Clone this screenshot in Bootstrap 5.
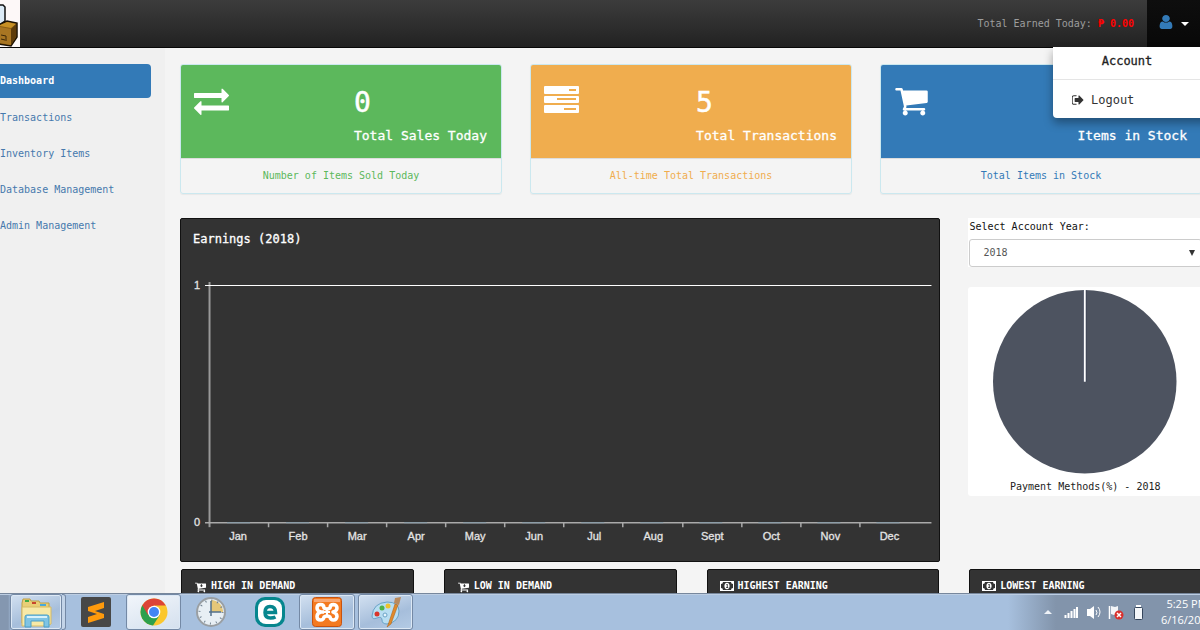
<!DOCTYPE html>
<html lang="en">
<head>
<meta charset="utf-8">
<meta name="viewport" content="width=device-width, initial-scale=1">
<title>Dashboard</title>
<link href="https://cdn.jsdelivr.net/npm/bootstrap@5.3.0/dist/css/bootstrap.min.css" rel="stylesheet">
<style>
:root { --bs-primary-rgb: 51,122,183; }
body { font-family: "DejaVu Sans Mono", monospace; font-size: 10px; line-height: 16px; background: #f4f4f4; color: #222; }
.fa { fill: currentColor; display: block; flex: none; }

/* top bar */
.topbar { height: 48px; background: linear-gradient(#3c3c3c, #222); border-bottom: 1px solid #080808; z-index: 5; }
.brand-box { width: 20px; background: #fdf8f8; }
.earned { color: #9d9d9d; margin-right: 13px; }
.earned b { color: #f00; }
.user-toggle { width: 53px; background: linear-gradient(#0e0e0e, #080808); color: #337ab7; border: 0; padding: 0 0 3px 12px; gap: 8px; }
.user-toggle:after { content: ""; border: 4px solid transparent; border-top-color: #fff; border-bottom: 0; margin-top: 3px; }
.user-menu { position: absolute; top: 47px; right: -12px; width: 159px; background: #fff; border-radius: 0 0 4px 4px; box-shadow: 0 5px 10px rgba(0,0,0,.35); font-size: 12px; }
.user-menu h6 { font-size: 12px; line-height: 16px; padding: 6px 11px 10px 0; border-bottom: 1px solid #e5e5e5; -webkit-text-stroke: .3px; }
.user-menu a { color: #333; padding: 12px 19px 10px; gap: 7px; }

/* sidebar */
.side { width: 165px; background: #f0f0f0; padding-top: 16px; }
.side .nav { gap: 2px; margin-right: 14px; }
.side .nav-link { color: #4679ad; padding: 9px 0 8px; line-height: 17px; border-radius: 0 4px 4px 0; }
.side .nav-link.active { background: #337ab7; color: #fff; font-weight: bold; padding: 8px 0 9px; }

/* content: the wide row runs just past the window edge */
.content { padding: 16px 0 0 15px; margin-right: -2px; min-width: 0; }
.stats { gap: 28px; margin-bottom: 24px; }
.stat { flex: 1 1 0; border: 1px solid #cbe8ef; border-radius: 3px; box-shadow: 0 1px 1px rgba(0,0,0,.05); overflow: hidden; color: var(--tone); }
.stat-head { background: var(--tone); color: #fff; padding: 18px 14px 12px 13px; height: 93px; }
.stat-num { font-size: 28px; line-height: 40px; -webkit-text-stroke: .5px; }
.stat-label { font-size: 13px; line-height: 20px; margin-top: 3px; -webkit-text-stroke: .3px; }
.stat-foot { border-top: 1px solid #ddd; padding: 8px 0 9px; line-height: 17px; }
.t-green { --tone: #5cb85c; } .t-amber { --tone: #f0ad4e; } .t-blue { --tone: #337ab7; }

.mid { gap: 28px; margin-bottom: 7px; }
.dark-box { background: #333; color: #fff; border: 1px solid #111; border-radius: 2px; }
.chart-box { flex: 760 1 0; }
.chart-box h2 { font-size: 12px; line-height: 18px; margin: 11px 12px 0; -webkit-text-stroke: .3px; }
.chart-box svg { display: block; width: 100%; }
.chart-box text { font-family: "Liberation Sans", sans-serif; font-size: 11px; fill: #e4e4e4; stroke: #e4e4e4; stroke-width: .3px; }
.aside-col { flex: 234 1 0; }
.year-box { background: #fff; padding-left: 1px; margin-bottom: 20px; }
.year-box label { line-height: 17px; margin-bottom: 4px; display: block; color: #111; }
.year-box select { font-size: 10px; line-height: 16px; height: 28px; color: #555; padding: 0 13px; border: 1px solid #ccc; border-radius: 3px; background: #fff url("data:image/svg+xml,%3Csvg xmlns='http://www.w3.org/2000/svg' width='6' height='6'%3E%3Cpath d='M0 0h6L3 6z' fill='%23333'/%3E%3C/svg%3E") no-repeat right 6px center; }
.pie-box { background: #fff; border-radius: 3px; padding: 2px 24px 1px; }
.pie-box svg { width: 100%; display: block; margin-bottom: 4px; }
.lists { gap: 30px; padding-left: 1px; }
.lists section { flex: 1 1 0; height: 80px; padding: 8px 12px; gap: 4px; }
.lists h3 { font-size: 10px; line-height: 16px; }
.lists .fa { margin-top: 3px; }

/* desktop task bar */
.taskbar { height: 37px; background: linear-gradient(90deg, #8497b0, #8497b0 8px, #a7c0de 12px, #a7c0de 84%, #8294ab 88%); border-top: 1px solid #77879c; box-shadow: inset 0 1px #bccde2; z-index: 5; padding-left: 10px; }
.taskbar button { border: 1px solid transparent; background: none; padding: 0; width: 59px; }
.taskbar button svg { display: block; margin: auto; }
.taskbar .open { border-color: #7489a5; border-radius: 3px; box-shadow: inset 0 0 0 1px #dce8f5; background: linear-gradient(160deg, #d3e1f1, #a6bedb 60%, #b4cbe5); }
.taskbar .current { background: linear-gradient(160deg, #f2f6fb, #d4e0ee); }
.taskbar .stack-edge { width: 4px; border: 1px solid #7489a5; border-left: 0; border-radius: 0 3px 3px 0; background: #c3d4e8; }
.clock-text { font: 11px/16px "Open Sans", sans-serif; color: #fff; width: 54px; margin: 0 -14px 0 16px; flex: none; text-align: center; }
</style>
</head>
<body class="vh-100 d-flex flex-column overflow-hidden">
<svg class="d-none">
  <symbol id="cart" viewBox="0 0 1792 1792"><path d="M704 1536q0 52-38 90t-90 38-90-38-38-90 38-90 90-38 90 38 38 90zm896 0q0 52-38 90t-90 38-90-38-38-90 38-90 90-38 90 38 38 90zm128-1088v512q0 24-16.500 42.500t-40.500 21.500l-1044 122q13 60 13 70 0 16-24 64h920q26 0 45 19t19 45-19 45-45 19h-1024q-26 0-45-19t-19-45q0-11 8-31.500t16-36 21.500-40 15.500-29.500l-177-823h-204q-26 0-45-19t-19-45 19-45 45-19h256q16 0 28.500 6.500t19.500 15.500 13 24.500 8 26 5.500 29.500 4.500 26h1201q26 0 45 19t19 45z"/></symbol>
  <symbol id="cart-down" viewBox="0 0 1792 1792"><use href="#cart"/><path d="M960 480h160v190h170l-250 250-250-250h170z" fill="#333"/></symbol>
  <symbol id="cash" viewBox="0 0 14 10"><path fill-rule="evenodd" d="M0 0h14v10H0zM1 3v4q2 0 2 2h8q0-2 2-2V3q-2 0-2-2H3q0 2-2 2zm6-1.200c1.700 0 2.600 1.500 2.600 3.200S8.700 8.200 7 8.200 4.400 6.700 4.400 5 5.300 1.800 7 1.800zM6.400 3v1h.4v2h-.6v1h2V6h-.5V3z"/></symbol>
</svg>

<header class="topbar d-flex position-relative flex-shrink-0">
  <div class="brand-box">
    <svg width="20" height="47" viewBox="0 0 20 47" aria-label="Inventory"><path d="M-1 5l4 0 2 2v14l-6 4z" fill="#dcebf7" stroke="#111" stroke-width="1.500"/><path d="M-1 25l8-4 10 2 0 14-6 9-12-2z" fill="#8b5e14" stroke="#1c1204" stroke-width="1.500"/><path d="M0 25l7-3 9 2-5 4-11-2z" fill="#c79024"/><path d="M0 27l11 2v16l-11-2z" fill="#a87522"/><path d="M11 29l5-5v13l-5 8z" fill="#5d3b0a"/><path d="M1 35l5 1v5M1 39l4 1" stroke="#3b2607" fill="none"/></svg>
  </div>
  <div class="earned ms-auto align-self-center">Total Earned Today: <b>₱ 0.00</b></div>
  <button class="user-toggle d-flex align-items-center" aria-label="Account menu" aria-expanded="true">
    <svg class="fa" width="14" height="14" viewBox="192 128 1408 1536" preserveAspectRatio="none"><path d="M1536 1399q0 109-62.500 187t-150.500 78h-854q-88 0-150.500-78t-62.500-187q0-85 8.500-160.500t31.500-152 58.500-131 94-89 134.500-34.500q131 128 313 128t313-128q76 0 134.500 34.500t94 89 58.500 131 31.500 152 8.500 160.500zm-256-887q0 159-112.500 271.500t-271.500 112.500-271.500-112.500-112.500-271.500 112.500-271.500 271.500-112.500 271.500 112.500 112.500 271.500z"/></svg>
  </button>
  <div class="user-menu">
    <h6 class="text-center m-0">Account</h6>
    <a href="#" class="d-flex align-items-center text-decoration-none"><svg class="fa" width="12" height="12" viewBox="96 128 1600 1536"><path d="M704 1440q0 4 1 20t.5 26.500-3 23.500-10 19.500-20.500 6.500h-320q-119 0-203.500-84.500t-84.500-203.500v-704q0-119 84.500-203.500t203.500-84.500h320q13 0 22.500 9.500t9.500 22.500q0 4 1 20t.5 26.500-3 23.500-10 19.500-20.500 6.500h-320q-66 0-113 47t-47 113v704q0 66 47 113t113 47h312l11.500 1 11.500 3 8 5.500 7 9 2 13.500zm928-544q0 26-19 45l-544 544q-19 19-45 19t-45-19-19-45v-288h-448q-26 0-45-19t-19-45v-384q0-26 19-45t45-19h448v-288q0-26 19-45t45-19 45 19l544 544q19 19 19 45z"/></svg>Logout</a>
  </div>
</header>

<div class="d-flex flex-fill overflow-hidden">
  <aside class="side flex-shrink-0">
    <nav class="nav flex-column">
      <a class="nav-link active" href="#">Dashboard</a>
      <a class="nav-link" href="#">Transactions</a>
      <a class="nav-link" href="#">Inventory Items</a>
      <a class="nav-link" href="#">Database Management</a>
      <a class="nav-link" href="#">Admin Management</a>
    </nav>
  </aside>

  <main class="content flex-fill">
    <div class="stats d-flex">
      <div class="stat t-green">
        <div class="stat-head d-flex justify-content-between">
          <svg class="fa" width="35" height="35" viewBox="0 0 1792 1792"><path d="M1792 1184v192q0 13-9.500 22.500t-22.500 9.500h-1376v192q0 13-9.500 22.500t-22.500 9.500q-12 0-24-10l-319-320q-9-9-9-22 0-14 9-23l320-320q9-9 23-9 13 0 22.500 9.500t9.500 22.500v192h1376q13 0 22.500 9.500t9.500 22.500zm0-544q0 14-9 23l-320 320q-9 9-23 9-13 0-22.500-9.500t-9.500-22.500v-192h-1376q-13 0-22.500-9.500t-9.500-22.500v-192q0-13 9.500-22.500t22.500-9.500h1376v-192q0-14 9-23t23-9q12 0 24 10l319 319q9 9 9 23z"/></svg>
          <div><div class="stat-num">0</div><div class="stat-label">Total Sales Today</div></div>
        </div>
        <div class="stat-foot text-center">Number of Items Sold Today</div>
      </div>
      <div class="stat t-amber">
        <div class="stat-head d-flex justify-content-between">
          <svg class="fa" width="35" height="35" viewBox="0 2 35 35"><path fill-rule="evenodd" d="M1 5h33q1 0 1 1v6q0 1-1 1H1q-1 0-1-1V6q0-1 1-1zm24 3v2h7V8zM1 15h33q1 0 1 1v5q0 1-1 1H1q-1 0-1-1v-5q0-1 1-1zm12 2v2h19v-2zM1 24h33q1 0 1 1v6q0 1-1 1H1q-1 0-1-1v-6q0-1 1-1zm19 3v2h12v-2z"/></svg>
          <div><div class="stat-num">5</div><div class="stat-label">Total Transactions</div></div>
        </div>
        <div class="stat-foot text-center">All-time Total Transactions</div>
      </div>
      <div class="stat t-blue">
        <div class="stat-head d-flex justify-content-between">
          <svg class="fa" width="35" height="35"><use href="#cart"/></svg>
          <div><div class="stat-num">&nbsp;</div><div class="stat-label">Items in Stock</div></div>
        </div>
        <div class="stat-foot text-center">Total Items in Stock</div>
      </div>
    </div>

    <div class="mid d-flex">
      <section class="chart-box dark-box">
        <h2>Earnings (2018)</h2>
        <svg viewBox="181 248 758 313" role="img" aria-label="Earnings by month">
          <path d="M209.500 282v245" stroke="#999" stroke-width="2"/>
          <path d="M205 285.500h726" stroke="#fff"/>
          <path d="M205 522.500h726M268.500 523v4M327.500 523v4M386.500 523v4M445.500 523v4M504.500 523v4M563.500 523v4M622.500 523v4M682.500 523v4M741.500 523v4M800.500 523v4M859.500 523v4" stroke="#aaa" stroke-width="1.500"/>
          <path d="M227 522.500h23m36 0h23m36 0h23m36 0h23m36 0h23m36 0h23m36 0h23m36 0h23m36 0h23m36 0h23m36 0h23m36 0h23" stroke="#8299a6"/>
          <text x="194" y="289">1</text><text x="194" y="526">0</text>
          <g text-anchor="middle">
            <text x="238" y="540">Jan</text><text x="298" y="540">Feb</text><text x="357" y="540">Mar</text><text x="416" y="540">Apr</text><text x="475" y="540">May</text><text x="534" y="540">Jun</text><text x="594" y="540">Jul</text><text x="653" y="540">Aug</text><text x="712" y="540">Sept</text><text x="771" y="540">Oct</text><text x="830" y="540">Nov</text><text x="889" y="540">Dec</text>
          </g>
        </svg>
      </section>
      <div class="aside-col">
        <div class="year-box">
          <label for="year">Select Account Year:</label>
          <select id="year" class="form-select"><option>2018</option></select>
        </div>
        <div class="pie-box text-center">
          <svg viewBox="0 0 186 186" role="img" aria-label="Payment methods"><circle cx="93" cy="93" r="92" fill="#4d5360"/><path d="M93 1v92" stroke="#273048" stroke-width="3"/><path d="M93 1v92" stroke="#fff" stroke-width="2"/></svg>
          Payment Methods(%) - 2018
        </div>
      </div>
    </div>

    <div class="lists d-flex">
      <section class="dark-box d-flex"><svg class="fa" width="13" height="12"><use href="#cart-down"/></svg><h3 class="m-0 fw-bold">HIGH IN DEMAND</h3></section>
      <section class="dark-box d-flex"><svg class="fa" width="13" height="12"><use href="#cart-down"/></svg><h3 class="m-0 fw-bold">LOW IN DEMAND</h3></section>
      <section class="dark-box d-flex"><svg class="fa" width="14" height="10"><use href="#cash"/></svg><h3 class="m-0 fw-bold">HIGHEST EARNING</h3></section>
      <section class="dark-box d-flex"><svg class="fa" width="14" height="10"><use href="#cash"/></svg><h3 class="m-0 fw-bold">LOWEST EARNING</h3></section>
    </div>
  </main>
</div>

<footer class="taskbar d-flex flex-shrink-0 position-relative overflow-hidden">
  <button class="open" style="width:52px" aria-label="Explorer">
    <svg width="32" height="32" viewBox="0 0 32 32"><path d="M2 7l1-4h7l1 2h8l1 2h9v20H2z" fill="#e9cf76" stroke="#bf9f45"/><path d="M5 5h4" stroke="#4a4" stroke-width="2"/><path d="M12 7h4" stroke="#c8452e" stroke-width="2"/><path d="M20 9h6" stroke="#48a9dc" stroke-width="2"/><path d="M2 11h29v17l-4 2H2z" fill="#f7e9a7" stroke="#d5ba65"/><path d="M5 31V21q0-2 2-2h20q2 0 2 2v10h-5v-6H11v6z" fill="#7fc4e4" stroke="#4a9fc8"/><path d="M7 21h20" stroke="#d7f2fb" stroke-width="2"/></svg>
  </button>
  <span class="stack-edge"></span>
  <button style="width:60px" aria-label="Text editor">
    <svg width="30" height="30" viewBox="0 0 30 30"><rect width="30" height="30" rx="2" fill="#474747"/><path d="M7 10l16-5v6l-9 3 9 3v4L7 26v-6l9-3-9-3z" fill="#ff9a0c"/></svg>
  </button>
  <button class="open current" style="width:55px" aria-label="Browser">
    <svg width="28" height="28" viewBox="0 0 28 28"><circle cx="14" cy="14" r="13.500" fill="#fbc72d"/><path d="M14 14L2.300 7.200A13.500 13.500 0 0 0 13 27.400l6.500-10z" fill="#2da04d"/><path d="M2.300 7.200A13.500 13.500 0 0 1 25.800 7.500H14L8 17z" fill="#dc4437"/><circle cx="14" cy="14" r="6.300" fill="#fff"/><circle cx="14" cy="14" r="5" fill="#4285f4"/></svg>
  </button>
  <button aria-label="Clock">
    <svg width="30" height="30" viewBox="0 0 30 30"><circle cx="15" cy="15" r="14" fill="#e8eff4" stroke="#9a9fa3" stroke-width="2"/><path d="M15 15V3a12 12 0 0 1 12 12z" fill="#e6c778"/><circle cx="15" cy="15" r="11.500" fill="none" stroke="#6f8190" stroke-width="2" stroke-dasharray="1 5.020"/><path d="M15 4v15M13 15h12" stroke="#53718c" stroke-width="1.500"/></svg>
  </button>
  <button aria-label="Antivirus">
    <svg width="30" height="30" viewBox="0 0 30 30"><rect width="30" height="30" rx="10" fill="#06868e"/><rect x="3" y="3" width="24" height="24" rx="8" fill="#fff"/><path d="M9 15.500h11.500q0-6-5.500-6-5 0-5 6 0 5.500 5.500 5.500 3 0 5-1" fill="none" stroke="#06868e" stroke-width="3.500"/></svg>
  </button>
  <button class="open" style="width:56px" aria-label="Web server">
    <svg width="30" height="30" viewBox="0 0 30 30"><rect x=".5" y=".5" width="29" height="29" rx="3" fill="#f47a20" stroke="#c75310"/><path d="M2 2h26v3H2z" fill="#f9a873"/><path d="M12 15H9q-4 1-4 4.500T8.500 23q3 0 3.500-3 3-2 6 0 .5 3 3.500 3t3.500-3.500q0-3.500-4-4.500 4-1 4-4T21.500 7.500Q18 7.500 18 11q-3 2-6 0 0-3.500-3.500-3.500T5 11q0 3 4 4" fill="none" stroke="#fff" stroke-width="3.500" stroke-linejoin="round"/><path d="M12 15h6M15 12v6" stroke="#fff" stroke-width="2"/></svg>
  </button>
  <button class="open" style="width:55px;margin-left:3px" aria-label="Paint">
    <svg width="32" height="32" viewBox="0 0 32 32"><path d="M2 20Q3 7 17 6q12 0 12 9 0 11-12 13-5 0-5-4t-5-2-5-2z" fill="#b8def2" stroke="#6aa3c7"/><circle cx="7" cy="18" r="2.500" fill="#d9352b"/><circle cx="12" cy="12" r="2.500" fill="#4db24a"/><circle cx="18" cy="10" r="2.500" fill="#efc22c"/><circle cx="15" cy="19" r="2" fill="#e6f4fb" stroke="#6aa3c7"/><path d="M18 29l7-21 3 1-7 19-4 3z" fill="#e08a2b" stroke="#a85f14" stroke-width=".5"/><path d="M24 7l1-5 6-1-2 8z" fill="#b98a5d"/></svg>
  </button>
  <div class="ms-auto d-flex align-items-center">
    <svg width="100" height="20" viewBox="1044 602 100 20" aria-label="System tray">
      <path d="M1044 614l4-4 4 4z" fill="#eef2f7"/>
      <path d="M1065.500 618v-3M1068.500 618v-5M1071.500 618v-7M1074.500 618v-9M1077 618v-11" stroke="#fff" stroke-width="2"/>
      <path d="M1087 609h3l4-3v13l-4-3h-3z" fill="#fff"/><path d="M1096 610q2 3 0 5M1098 607q4 5 0 10" stroke="#fff" fill="none"/>
      <path d="M1109.500 606v13" stroke="#fff" stroke-width="1.500"/><path d="M1111 606l4 1 3-1v8l-4 1-3-1z" fill="#f3f5f8"/><circle cx="1119" cy="615" r="4.500" fill="#d9302c"/><path d="M1117 613l4 4m0-4l-4 4" stroke="#fff" stroke-width="1.500"/>
      <path d="M1136 605h5v2h-5z" fill="#fff"/><rect x="1134.500" y="607.500" width="8" height="12" rx="1" fill="#f4f7fa" stroke="#35465c"/>
    </svg>
    <div class="clock-text">5:25 PM<br>6/16/2018</div>
  </div>
</footer>
<script src="https://cdn.jsdelivr.net/npm/bootstrap@5.3.0/dist/js/bootstrap.bundle.min.js"></script>
</body>
</html>
